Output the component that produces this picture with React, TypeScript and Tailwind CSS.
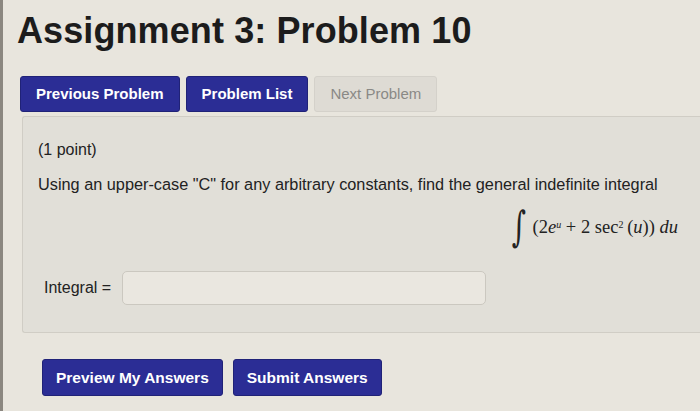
import React from 'react';

const navBtn = "h-[36px] px-[15px] rounded-[3px] text-[15px] font-bold flex items-center";
const actionBtn = "h-[37px] px-[13px] rounded-[3px] bg-[#2b2d95] border border-[#202277] text-white text-[15.5px] font-bold flex items-center";

export default function App() {
  return (
    <div className="w-[700px] h-[411px] overflow-hidden bg-[#e8e5dd] flex font-['Liberation_Sans',Arial,sans-serif] text-[#222]">
      <div className="w-[3px] bg-[#8b8780] shrink-0" />
      <div className="flex-1 flex flex-col">
        <h1 className="pt-[11px] pl-[14px] h-[50px] text-[36px] leading-[40px] font-bold text-[#1c1c1c] tracking-[0.1px]">
          Assignment 3: Problem 10
        </h1>

        <div className="mt-[26px] ml-[17px] flex gap-[6px]">
          <button className={`${navBtn} bg-[#2b2d95] border border-[#202277] text-white`}>Previous Problem</button>
          <button className={`${navBtn} bg-[#2b2d95] border border-[#202277] text-white`}>Problem List</button>
          <button className={`${navBtn} bg-[#dedbd4] border border-[#d4d1ca] text-[#8a8986] font-normal`}>Next Problem</button>
        </div>

        <div className="mt-[4px] ml-[19px] h-[217px] bg-[#e1dfd8] border border-[#d0cdc5] rounded-l-[3px] border-r-0 pl-[15px] pr-[22px] pt-[23px] flex flex-col">
          <p className="text-[16px] leading-[20px]">(1 point)</p>
          <p className="mt-[14px] text-[16.3px] leading-[20px]">
            Using an upper-case "C" for any arbitrary constants, find the general indefinite integral
          </p>

          <div className="mt-[16px] h-[36px] flex items-center justify-end font-['Liberation_Serif','DejaVu_Serif',serif] text-[18.5px] text-[#222]">
            <span className="text-[42px] leading-[36px] font-['DejaVu_Serif',serif] font-light mr-[3px] -mt-[2px] scale-x-[0.65]">∫</span>
            <span>
              (2<i>e</i><sup className="text-[10px] italic">u</sup> + 2 sec<sup className="text-[10px]">2</sup>&thinsp;(<i>u</i>)) <i>du</i>
            </span>
          </div>

          <div className="mt-[25px] ml-[6px] flex items-center gap-[11px]">
            <span className="text-[16px]">Integral =</span>
            <div className="w-[364px] h-[34px] bg-[#eae7e0] border border-[#cbc8c0] rounded-[5px]" />
          </div>
        </div>

        <div className="mt-[26px] ml-[39px] flex gap-[10px]">
          <button className={actionBtn}>Preview My Answers</button>
          <button className={actionBtn}>Submit Answers</button>
        </div>
      </div>
    </div>
  );
}
